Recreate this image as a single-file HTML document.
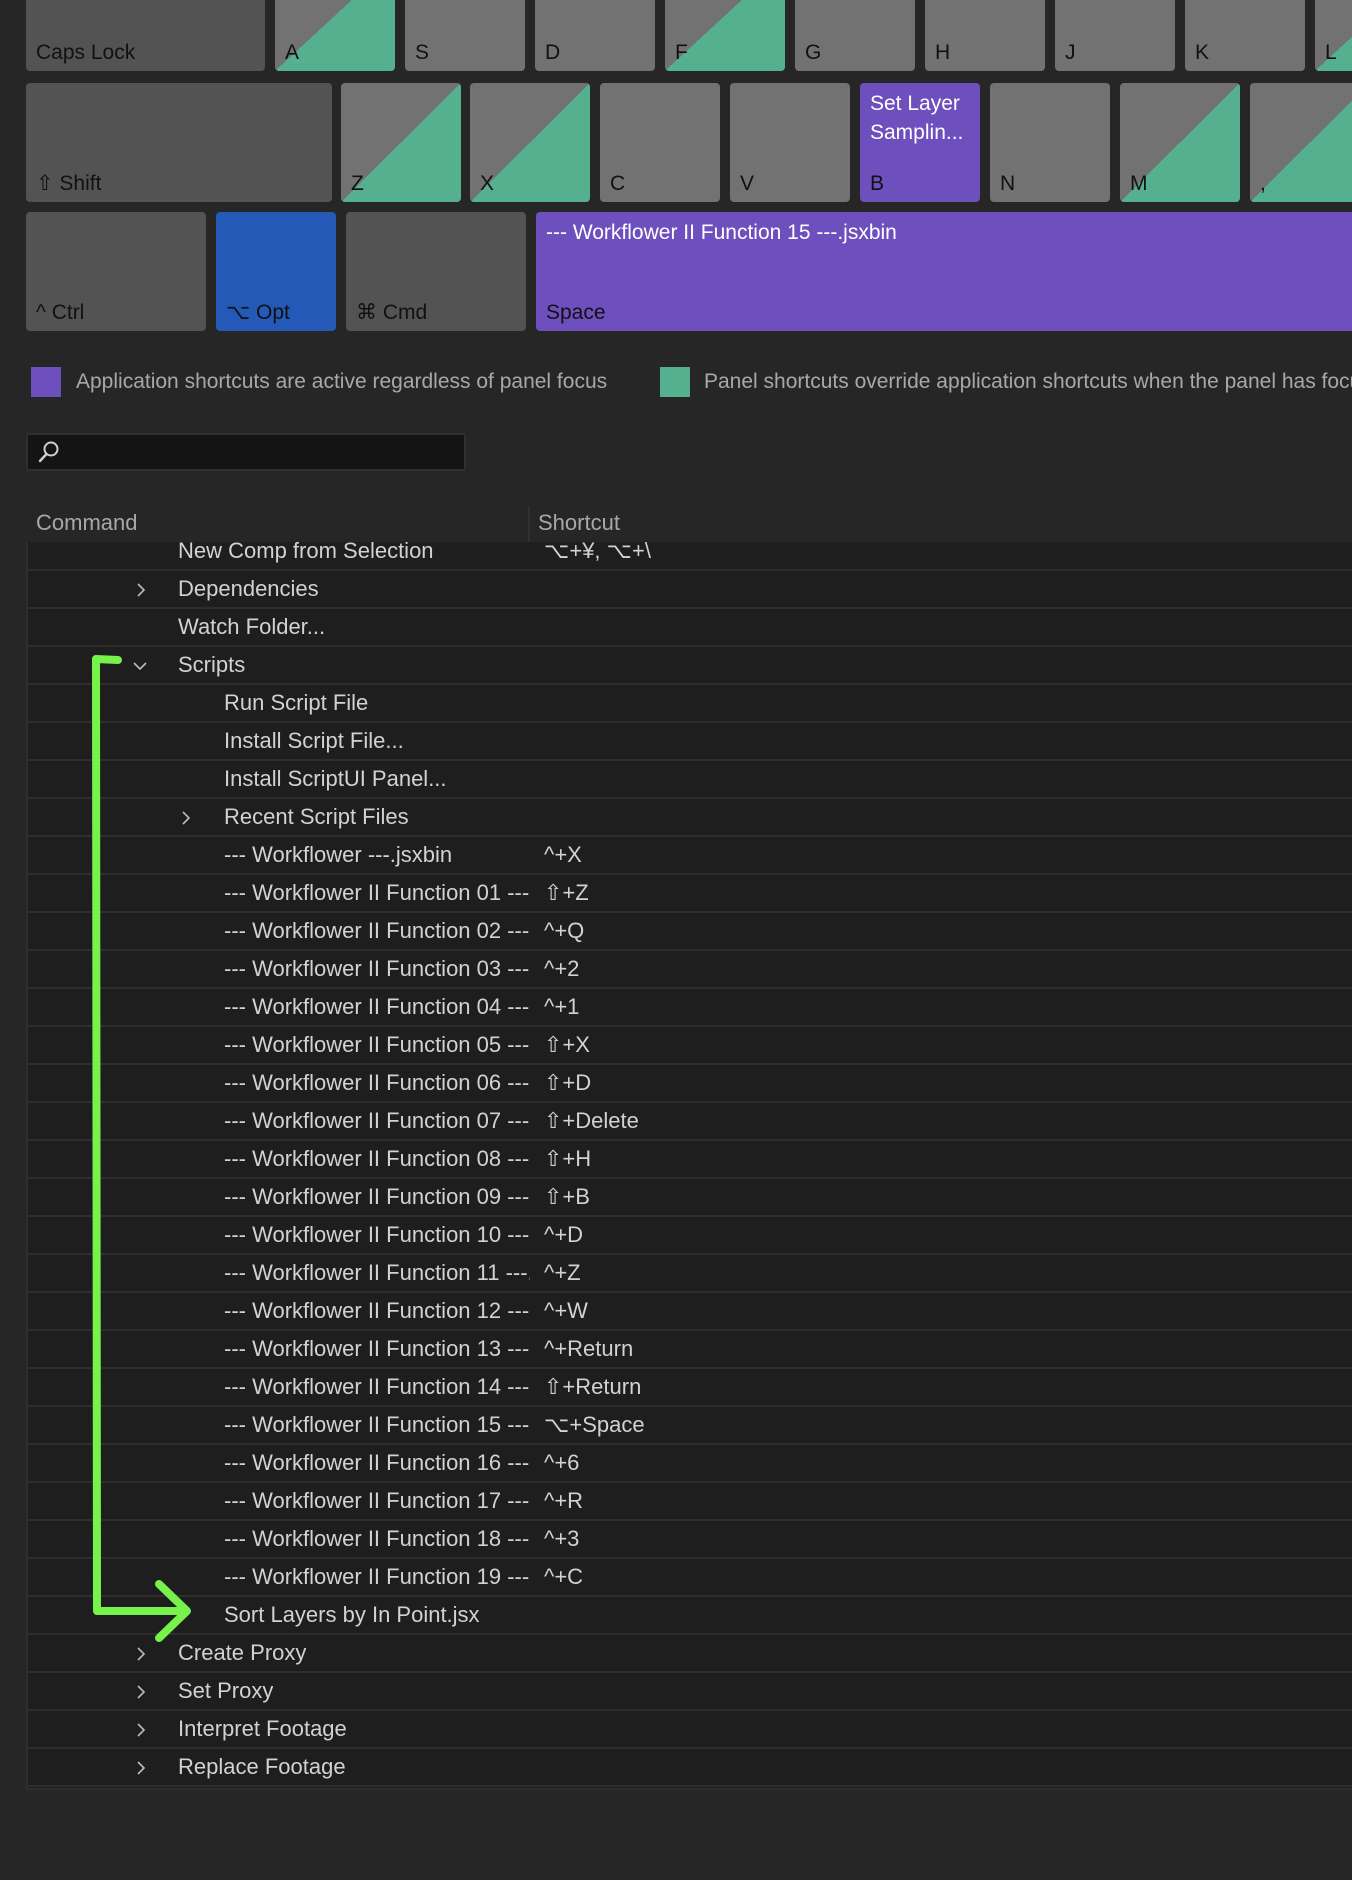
<!DOCTYPE html>
<html><head><meta charset="utf-8"><style>
*{margin:0;padding:0;box-sizing:border-box}
body{width:1352px;height:1880px;background:#262626;position:relative;overflow:hidden;font-family:"Liberation Sans","DejaVu Sans",sans-serif;}
.k{position:absolute;border-radius:4px;background:#727272;color:#111;font-size:21px;overflow:hidden}
.k .l{position:absolute;left:10px;bottom:6px;white-space:nowrap}
.k .t{position:absolute;left:10px;top:6px;color:#fff;line-height:29px;white-space:nowrap}
.m{background:#535353}
.g{background:linear-gradient(to bottom right,#727272 50%,#55b08f 50%)}
.p{background:#6d4fbd}
.b{background:#2459b8}
.leg{position:absolute;top:367px;width:30px;height:30px}
.legt{position:absolute;top:367px;line-height:30px;color:#a8a8a8;font-size:21px;white-space:nowrap}
.row{position:relative;width:100%;height:38px;background:#1e1e1e;border-bottom:2px solid #2e2e2e;color:#d2d2d2;font-size:22px;line-height:36px}
.row .c{position:absolute;top:0;white-space:nowrap;overflow:hidden}
.c1{left:150px}
.c2{left:196px;width:306px}
.row .s{position:absolute;left:516px;top:0;white-space:nowrap}
.row svg{position:absolute;top:11px}
.v1{left:107px}.v2{left:152px}
</style></head><body>
<div class="k m" style="left:26px;top:-40px;width:239px;height:111px"><span class="l">Caps Lock</span></div>
<div class="k g" style="left:275px;top:-40px;width:120px;height:111px"><span class="l">A</span></div>
<div class="k" style="left:405px;top:-40px;width:120px;height:111px"><span class="l">S</span></div>
<div class="k" style="left:535px;top:-40px;width:120px;height:111px"><span class="l">D</span></div>
<div class="k g" style="left:665px;top:-40px;width:120px;height:111px"><span class="l">F</span></div>
<div class="k" style="left:795px;top:-40px;width:120px;height:111px"><span class="l">G</span></div>
<div class="k" style="left:925px;top:-40px;width:120px;height:111px"><span class="l">H</span></div>
<div class="k" style="left:1055px;top:-40px;width:120px;height:111px"><span class="l">J</span></div>
<div class="k" style="left:1185px;top:-40px;width:120px;height:111px"><span class="l">K</span></div>
<div class="k g" style="left:1315px;top:-40px;width:120px;height:111px"><span class="l">L</span></div>
<div class="k m" style="left:26px;top:83px;width:306px;height:119px"><span class="l">⇧ Shift</span></div>
<div class="k g" style="left:341px;top:83px;width:120px;height:119px"><span class="l">Z</span></div>
<div class="k g" style="left:470px;top:83px;width:120px;height:119px"><span class="l">X</span></div>
<div class="k" style="left:600px;top:83px;width:120px;height:119px"><span class="l">C</span></div>
<div class="k" style="left:730px;top:83px;width:120px;height:119px"><span class="l">V</span></div>
<div class="k p" style="left:860px;top:83px;width:120px;height:119px"><span class="t">Set Layer<br>Samplin...</span><span class="l">B</span></div>
<div class="k" style="left:990px;top:83px;width:120px;height:119px"><span class="l">N</span></div>
<div class="k g" style="left:1120px;top:83px;width:120px;height:119px"><span class="l">M</span></div>
<div class="k g" style="left:1250px;top:83px;width:120px;height:119px"><span class="l">,</span></div>
<div class="k m" style="left:26px;top:212px;width:180px;height:119px"><span class="l">^ Ctrl</span></div>
<div class="k b" style="left:216px;top:212px;width:120px;height:119px"><span class="l">⌥ Opt</span></div>
<div class="k m" style="left:346px;top:212px;width:180px;height:119px"><span class="l">⌘ Cmd</span></div>
<div class="k p" style="left:536px;top:212px;width:830px;height:119px"><span class="t">--- Workflower II Function 15 ---.jsxbin</span><span class="l">Space</span></div>
<div class="leg" style="left:31px;background:#6d4fbd"></div>
<div class="legt" style="left:76px">Application shortcuts are active regardless of panel focus</div>
<div class="leg" style="left:660px;background:#55b08f"></div>
<div class="legt" style="left:704px">Panel shortcuts override application shortcuts when the panel has focus</div>
<div style="position:absolute;left:26px;top:433px;width:440px;height:38px;background:#141414;border:2px solid #2f2f2f;border-radius:3px"></div>
<svg style="position:absolute;left:36px;top:439px" width="26" height="26" viewBox="0 0 26 26"><circle cx="15" cy="10" r="6.5" fill="none" stroke="#cfcfcf" stroke-width="2"/><line x1="10.5" y1="15" x2="4" y2="22" stroke="#cfcfcf" stroke-width="2.4" stroke-linecap="round"/></svg>
<div style="position:absolute;left:36px;top:510px;color:#a8a8a8;font-size:22px">Command</div>
<div style="position:absolute;left:528px;top:506px;width:2px;height:36px;background:#303030"></div>
<div style="position:absolute;left:538px;top:510px;color:#a8a8a8;font-size:22px">Shortcut</div>
<div style="position:absolute;left:26px;top:542px;right:0;height:1248px;overflow:hidden;border-left:2px solid #2e2e2e;border-bottom:2px solid #2e2e2e;background:#1e1e1e">
<div style="position:relative;top:-9px">
<div class="row"><span class="c c1">New Comp from Selection</span><span class="s">⌥+¥, ⌥+\</span></div>
<div class="row"><svg class="v1" width="12" height="16"><polyline points="3,2 9,8 3,14" fill="none" stroke="#bbb" stroke-width="1.6"/></svg><span class="c c1">Dependencies</span></div>
<div class="row"><span class="c c1">Watch Folder...</span></div>
<div class="row"><svg class="v1" width="18" height="16" style="left:104px"><polyline points="2,5 8,11 14,5" fill="none" stroke="#bbb" stroke-width="1.6"/></svg><span class="c c1">Scripts</span></div>
<div class="row"><span class="c c2">Run Script File</span></div>
<div class="row"><span class="c c2">Install Script File...</span></div>
<div class="row"><span class="c c2">Install ScriptUI Panel...</span></div>
<div class="row"><svg class="v2" width="12" height="16"><polyline points="3,2 9,8 3,14" fill="none" stroke="#bbb" stroke-width="1.6"/></svg><span class="c c2">Recent Script Files</span></div>
<div class="row"><span class="c c2">--- Workflower ---.jsxbin</span><span class="s">^+X</span></div>
<div class="row"><span class="c c2">--- Workflower II Function 01 ---.jsxbin</span><span class="s">⇧+Z</span></div>
<div class="row"><span class="c c2">--- Workflower II Function 02 ---.jsxbin</span><span class="s">^+Q</span></div>
<div class="row"><span class="c c2">--- Workflower II Function 03 ---.jsxbin</span><span class="s">^+2</span></div>
<div class="row"><span class="c c2">--- Workflower II Function 04 ---.jsxbin</span><span class="s">^+1</span></div>
<div class="row"><span class="c c2">--- Workflower II Function 05 ---.jsxbin</span><span class="s">⇧+X</span></div>
<div class="row"><span class="c c2">--- Workflower II Function 06 ---.jsxbin</span><span class="s">⇧+D</span></div>
<div class="row"><span class="c c2">--- Workflower II Function 07 ---.jsxbin</span><span class="s">⇧+Delete</span></div>
<div class="row"><span class="c c2">--- Workflower II Function 08 ---.jsxbin</span><span class="s">⇧+H</span></div>
<div class="row"><span class="c c2">--- Workflower II Function 09 ---.jsxbin</span><span class="s">⇧+B</span></div>
<div class="row"><span class="c c2">--- Workflower II Function 10 ---.jsxbin</span><span class="s">^+D</span></div>
<div class="row"><span class="c c2">--- Workflower II Function 11 ---.jsxbin</span><span class="s">^+Z</span></div>
<div class="row"><span class="c c2">--- Workflower II Function 12 ---.jsxbin</span><span class="s">^+W</span></div>
<div class="row"><span class="c c2">--- Workflower II Function 13 ---.jsxbin</span><span class="s">^+Return</span></div>
<div class="row"><span class="c c2">--- Workflower II Function 14 ---.jsxbin</span><span class="s">⇧+Return</span></div>
<div class="row"><span class="c c2">--- Workflower II Function 15 ---.jsxbin</span><span class="s">⌥+Space</span></div>
<div class="row"><span class="c c2">--- Workflower II Function 16 ---.jsxbin</span><span class="s">^+6</span></div>
<div class="row"><span class="c c2">--- Workflower II Function 17 ---.jsxbin</span><span class="s">^+R</span></div>
<div class="row"><span class="c c2">--- Workflower II Function 18 ---.jsxbin</span><span class="s">^+3</span></div>
<div class="row"><span class="c c2">--- Workflower II Function 19 ---.jsxbin</span><span class="s">^+C</span></div>
<div class="row"><span class="c c2">Sort Layers by In Point.jsx</span></div>
<div class="row"><svg class="v1" width="12" height="16"><polyline points="3,2 9,8 3,14" fill="none" stroke="#bbb" stroke-width="1.6"/></svg><span class="c c1">Create Proxy</span></div>
<div class="row"><svg class="v1" width="12" height="16"><polyline points="3,2 9,8 3,14" fill="none" stroke="#bbb" stroke-width="1.6"/></svg><span class="c c1">Set Proxy</span></div>
<div class="row"><svg class="v1" width="12" height="16"><polyline points="3,2 9,8 3,14" fill="none" stroke="#bbb" stroke-width="1.6"/></svg><span class="c c1">Interpret Footage</span></div>
<div class="row"><svg class="v1" width="12" height="16"><polyline points="3,2 9,8 3,14" fill="none" stroke="#bbb" stroke-width="1.6"/></svg><span class="c c1">Replace Footage</span></div>
</div></div>
<svg style="position:absolute;left:0;top:0" width="300" height="1700"><g fill="none" stroke="#77f24a" stroke-width="8" stroke-linecap="round" stroke-linejoin="round"><polyline points="118,660 96,659 97,1611 186,1611"/><polyline points="159,1584 187,1611 159,1638"/></g></svg>
</body></html>
